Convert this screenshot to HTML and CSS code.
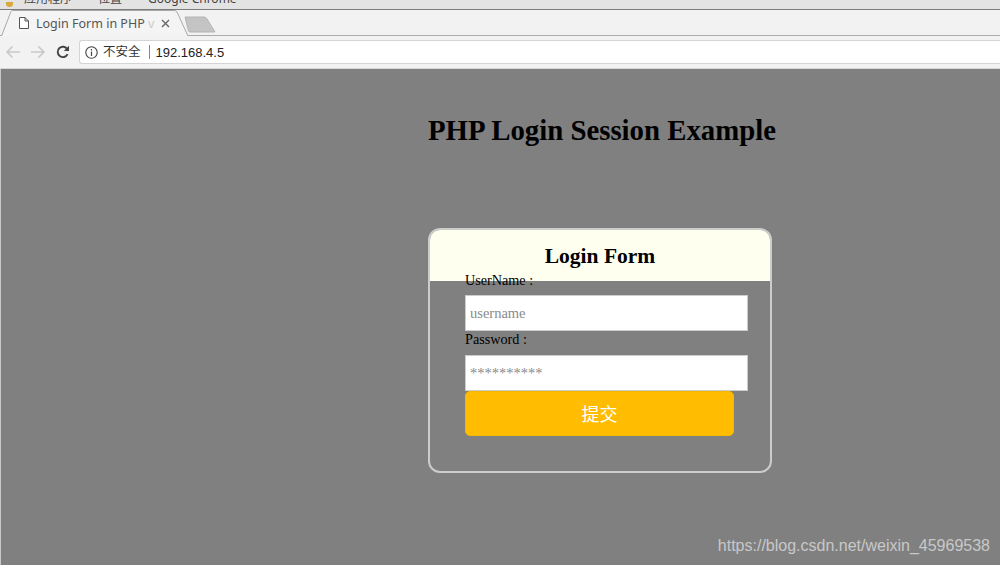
FILE: index.html
```html
<!DOCTYPE html>
<html lang="zh-CN">
<head>
  <meta charset="UTF-8">
  <title>Login Form in PHP</title>
  <link rel="stylesheet" href="styles.css">
</head>
<body>
  <!-- window title bar, cut off by the top of the shot -->
  <div class="titlebar">
    <span class="app-dot"></span>
    <span class="menu-item">应用程序</span>
    <span class="menu-item">位置</span>
    <span class="menu-item">Google Chrome</span>
  </div>

  <!-- tab strip -->
  <div class="tabstrip">
    <div class="tab">
      <svg class="tab-shape" width="190" height="27" viewBox="0 0 190 27">
        <path d="M0.5 26 L10 1.5 Q10.5 0.5 12 0.5 L173 0.5 Q175 0.5 176 2 L187 26" fill="#f4f4f4" stroke="#a8a8a8"/>
      </svg>
      <svg class="tab-page" width="10" height="12" viewBox="0 0 10 12">
        <path d="M0.5 0.5 H6 L9.5 4 V11.5 H0.5 Z M6 0.5 V4 H9.5" fill="#fff" stroke="#555"/>
      </svg>
      <span class="tab-title">Login Form in PHP <span class="tab-fade">v</span></span>
      <svg class="tab-close" width="9" height="9" viewBox="0 0 9 9">
        <path d="M1 1 L8 8 M8 1 L1 8" stroke="#666" stroke-width="1.4"/>
      </svg>
    </div>
    <svg class="new-tab" width="32" height="17" viewBox="0 0 32 17">
      <path d="M1 1 H20 Q22 1 23 3 L31 16 H6 Q5 16 4.500 15 Z" fill="#c4c4c4" stroke="#b4b4b4"/>
    </svg>
  </div>

  <!-- address bar -->
  <div class="toolbar">
    <svg class="nav-icon" width="16" height="14" viewBox="0 0 16 14">
      <path d="M15 7 H2 M7.500 1.500 L2 7 L7.500 12.500" fill="none" stroke="#c9c9c9" stroke-width="1.600"/>
    </svg>
    <svg class="nav-icon" width="16" height="14" viewBox="0 0 16 14">
      <path d="M1 7 H14 M8.500 1.500 L14 7 L8.500 12.500" fill="none" stroke="#c9c9c9" stroke-width="1.600"/>
    </svg>
    <svg class="nav-icon nav-reload" width="14" height="14" viewBox="0 0 14 14">
      <path d="M11.600 9.200 A5.200 5.200 0 1 1 11.400 4.300" fill="none" stroke="#444" stroke-width="1.900"/>
      <path d="M13 0.800 V6 H7.800 Z" fill="#444"/>
    </svg>
    <div class="omnibox">
      <svg width="13" height="13" viewBox="0 0 13 13">
        <circle cx="6.500" cy="6.500" r="5.700" fill="none" stroke="#444" stroke-width="1.100"/>
        <path d="M6.500 5.600 V10 M6.500 3 V4.400" stroke="#444" stroke-width="1.200"/>
      </svg>
      <span class="not-secure">不安全</span>
      <span class="address">192.168.4.5</span>
    </div>
  </div>

  <!-- page content -->
  <div class="page">
    <div class="main">
      <h1>PHP Login Session Example</h1>
      <div class="login">
        <h2>Login Form</h2>
        <form class="login-form">
          <label for="name">UserName :</label>
          <input id="name" type="text" placeholder="username">
          <label class="password-label" for="password">Password :</label>
          <input id="password" type="text" placeholder="**********">
          <button type="button">提交</button>
        </form>
      </div>
    </div>
    <div class="watermark">https://blog.csdn.net/weixin_45969538</div>
  </div>
</body>
</html>
```

FILE: styles.css
```css
html, body {
  margin: 0;
  padding: 0;
}
body {
  width: 1000px;
  height: 565px;
  overflow: hidden;
  background: #808080;
  font-family: "Liberation Serif", "Noto Sans CJK SC", serif;
}

/* browser chrome */
.titlebar {
  height: 9px;
  background: #e3e3e3;
  border-bottom: 1px solid #7c7c7c;
  box-sizing: content-box;
  display: flex;
  align-items: flex-end;
  overflow: hidden;
  padding-left: 6px;
  font-family: "Noto Sans", "Noto Sans CJK SC", sans-serif;
  font-size: 12px;
  line-height: 12px;
  color: #444;
}
.app-dot {
  width: 7px;
  height: 5px;
  margin-right: 11px;
  margin-bottom: 2px;
  background: #d8a93a;
  border-radius: 0 0 4px 4px;
}
.menu-item {
  margin-right: 26px;
  margin-bottom: 4px;
}
.tabstrip {
  height: 25px;
  background: #f2f2f2;
  border-bottom: 1px solid #ababab;
  display: flex;
  align-items: flex-end;
  padding-left: 1px;
}
.tab {
  position: relative;
  width: 182px;
  height: 26px;
  margin-bottom: -1px;
  display: flex;
  align-items: center;
  padding-left: 18px;
  box-sizing: border-box;
  font-family: "Noto Sans", "Noto Sans CJK SC", sans-serif;
  font-size: 12.500px;
  color: #555;
}
.tab-shape {
  position: absolute;
  left: 0;
  top: 0;
}
.tab-page, .tab-title, .tab-close {
  position: relative;
}
.tab-title {
  margin-left: 7px;
  white-space: nowrap;
}
.tab-fade {
  color: #ccc;
}
.tab-close {
  margin-left: 7px;
}
.new-tab {
  margin-left: 1px;
  margin-bottom: 2px;
}
.toolbar {
  height: 28px;
  padding-top: 4px;
  background: #f2f2f2;
  border-bottom: 1px solid #d8d8d8;
  display: flex;
  align-items: flex-start;
  padding-left: 5px;
}
.nav-icon {
  margin-top: 5px;
  margin-right: 9px;
}
.nav-reload {
  margin-left: 1px;
}
.omnibox {
  flex: 1;
  height: 24px;
  background: #fff;
  border: 1px solid #d4d4d4;
  border-right: none;
  border-radius: 3px 0 0 3px;
  box-sizing: border-box;
  display: flex;
  align-items: center;
  padding-left: 5px;
  font-family: "Noto Sans", "Noto Sans CJK SC", sans-serif;
  color: #333;
}
.not-secure {
  font-size: 12.500px;
  margin-left: 5px;
  padding-right: 8px;
  border-right: 1px solid #888;
  line-height: 14px;
}
.address {
  font-family: "Liberation Sans", sans-serif;
  font-size: 13px;
  margin-left: 6px;
  color: #222;
}

/* login page */
.page {
  position: relative;
  height: 496px;
  border-left: 1px solid #c8c8c8;
  box-sizing: border-box;
}
.main {
  width: 344px;
  margin-left: 427px;
  padding-top: 44px;
}
h1 {
  margin: 0 0 81px;
  font-size: 28.800px;
  line-height: 34px;
  white-space: nowrap;
}
.login {
  height: 245px;
  border: 2px solid #ccc;
  border-radius: 12px;
  box-sizing: border-box;
}
h2 {
  margin: 0;
  height: 51px;
  padding-top: 14px;
  box-sizing: border-box;
  background: #fffff0;
  border-radius: 10px 10px 0 0;
  font-size: 21.500px;
  line-height: 24px;
  text-align: center;
}
.login-form {
  display: flex;
  flex-direction: column;
  align-items: flex-start;
  padding-left: 35px;
  margin-top: -10px;
}
label {
  font-size: 14.200px;
  line-height: 18px;
  height: 24px;
}
.password-label {
  margin-top: -1px;
  height: 25px;
}
input {
  width: 283px;
  height: 36px;
  padding: 0 4px;
  box-sizing: border-box;
  border: 1px solid #ccc;
  background: #fff;
  font-family: "Liberation Serif", serif;
  font-size: 14.500px;
  margin-bottom: 0;
}
input::placeholder {
  color: #8a8a8a;
}
button {
  width: 269px;
  height: 45px;
  padding-bottom: 2px;
  background: #ffbc00;
  border: 1px solid #f5b800;
  border-radius: 5px;
  color: #fff;
  font-family: "Liberation Serif", "Noto Sans CJK SC", serif;
  font-size: 18px;
}
.watermark {
  position: absolute;
  right: 10px;
  bottom: 10px;
  font-family: "Liberation Sans", sans-serif;
  font-size: 16px;
  color: #c8c8c8;
}
```
